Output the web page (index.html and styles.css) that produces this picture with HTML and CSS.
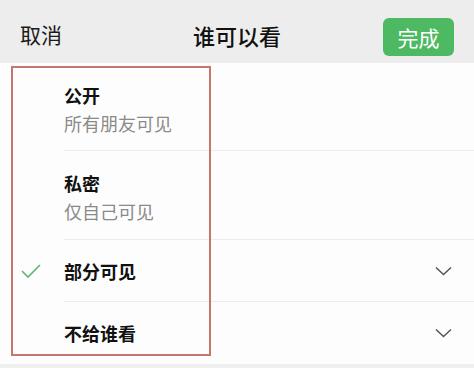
FILE: index.html
```html
<!DOCTYPE html>
<html lang="zh-CN">
<head>
  <meta charset="UTF-8">
  <meta name="viewport" content="width=device-width, initial-scale=1.0">
  <title>谁可以看</title>
  <link rel="stylesheet" href="styles.css">
</head>
<body>
  <div class="page">
    <!-- 顶部栏 -->
    <div class="top-bar">
      <span class="cancel">取消</span>
      <span class="title">谁可以看</span>
      <button class="done">完成</button>
    </div>

    <!-- 选项列表 -->
    <div class="option-list">
      <div class="option option-tall">
        <div class="mark"></div>
        <div class="option-body">
          <div class="option-text">
            <div class="option-name">公开</div>
            <div class="option-desc">所有朋友可见</div>
          </div>
        </div>
      </div>
      <div class="option option-tall">
        <div class="mark"></div>
        <div class="option-body">
          <div class="option-text">
            <div class="option-name">私密</div>
            <div class="option-desc">仅自己可见</div>
          </div>
        </div>
      </div>
      <div class="option">
        <div class="mark">
          <svg width="22" height="16" viewBox="0 0 22 16">
            <polyline points="2,8 8,14 20,2" fill="none" stroke="#5cb874" stroke-width="1.6" />
          </svg>
        </div>
        <div class="option-body">
          <div class="option-name">部分可见</div>
          <svg class="arrow" width="17" height="10" viewBox="0 0 17 10">
            <polyline points="1,1.5 8.5,8.5 16,1.5" fill="none" stroke="#555" stroke-width="1.5" />
          </svg>
        </div>
      </div>
      <div class="option">
        <div class="mark"></div>
        <div class="option-body no-line">
          <div class="option-name">不给谁看</div>
          <svg class="arrow" width="17" height="10" viewBox="0 0 17 10">
            <polyline points="1,1.5 8.5,8.5 16,1.5" fill="none" stroke="#555" stroke-width="1.5" />
          </svg>
        </div>
      </div>
    </div>

    <div class="bottom-strip"></div>

    <!-- 红色标注框 -->
    <div class="highlight"></div>
  </div>
</body>
</html>
```

FILE: styles.css
```css
body {
  margin: 0;
  padding: 0;
  font-family: "Noto Sans CJK SC", "Noto Sans", sans-serif;
  background-color: #fdfdfd;
  color: #111;
}
.page {
  position: relative;
  width: 474px;
  height: 368px;
  overflow: hidden;
}
.top-bar {
  height: 63px;
  background: #ededed;
  display: flex;
  align-items: center;
  justify-content: space-between;
  padding: 0 20px;
  box-sizing: border-box;
  position: relative;
}
.cancel {
  font-size: 21px;
  color: #1a1a1a;
  margin-top: 5px;
}
.title {
  position: absolute;
  left: 0;
  right: 0;
  top: 20px;
  text-align: center;
  font-size: 22px;
  font-weight: 500;
  line-height: 30px;
  pointer-events: none;
}
.done {
  width: 71px;
  height: 38px;
  margin-top: 11px;
  border: none;
  border-radius: 6px;
  background: #4dba63;
  color: #fff;
  font-family: inherit;
  font-size: 21px;
  padding: 0;
}
.option {
  display: flex;
  height: 62px;
}
.option-tall {
  height: 88px;
}
.option-tall + .option-tall {
  height: 89px;
}
.mark {
  width: 64px;
  display: flex;
  align-items: center;
  justify-content: center;
  padding-right: 2px;
  box-sizing: border-box;
}
.option-body {
  flex: 1;
  display: flex;
  align-items: center;
  justify-content: space-between;
  padding-right: 22px;
  border-bottom: 1px solid #ececec;
}
.option-body.no-line {
  border-bottom: none;
}
.option-text {
  padding-top: 4px;
}
.option-name {
  font-size: 18px;
  font-weight: 700;
  line-height: 28px;
}
.option-desc {
  font-size: 18px;
  color: #8a8a8a;
  line-height: 28px;
}
.arrow {
  display: block;
}
.bottom-strip {
  height: 6px;
  background: #efefef;
}
.highlight {
  position: absolute;
  left: 11px;
  top: 66px;
  width: 200px;
  height: 290px;
  border: 2px solid #c8756c;
  box-sizing: border-box;
}
```
